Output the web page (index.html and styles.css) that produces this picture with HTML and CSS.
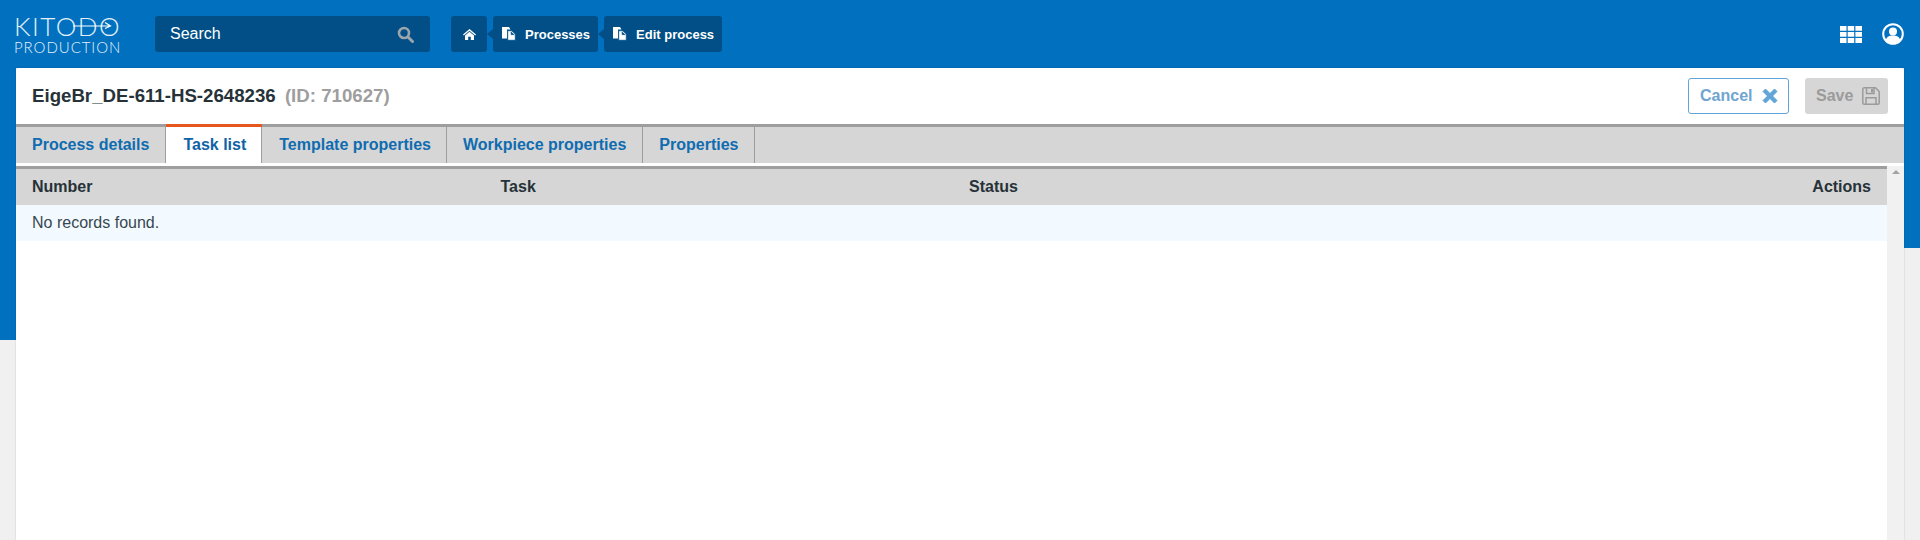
FILE: index.html
```html
<!DOCTYPE html>
<html lang="en">
<head>
<meta charset="utf-8">
<title>Edit process</title>
<link rel="stylesheet" href="styles.css">
</head>
<body>
<header class="topbar">
  <div class="logo">
    <div class="logo-word">KITODO
      <svg class="logo-line" width="40" height="16" viewBox="0 0 40 16"><path d="M0 8H37M32 4.500l5.500 3.500-5.500 2.500" fill="none" stroke="#fff" stroke-width="1.200"/></svg>
    </div>
    <div class="logo-sub">PRODUCTION</div>
  </div>
  <div class="search">
    <span>Search</span>
    <svg class="search-icon" width="17" height="17" viewBox="0 0 17 17"><circle cx="7" cy="7" r="5" fill="none" stroke="#9aa5ac" stroke-width="2.600"/><path d="M11 11l4.500 4.500" stroke="#9aa5ac" stroke-width="3" stroke-linecap="round"/></svg>
  </div>
  <nav class="crumbs">
    <a class="crumb crumb-home"><svg width="13" height="11" viewBox="0 0 13 11"><path d="M6.500 0L13 5.600l-.8.900L6.500 1.700.8 6.500 0 5.600zM2 6.600l4.500-3.800L11 6.600V11H7.800V7.800H5.200V11H2z" fill="#fff"/></svg></a>
    <a class="crumb crumb-link"><svg class="doc" width="14" height="14" viewBox="0 0 14 14"><path d="M0 0h7l1.500 2.500H5v9H0z" fill="#fff"/><path d="M5.700 3.700h4.100L13.300 7v6.300H5.700zM9.200 4.700v2.900h3.100" fill="#fff" stroke="#014f86" stroke-width=".8"/></svg>Processes</a>
    <a class="crumb crumb-link"><svg class="doc" width="14" height="14" viewBox="0 0 14 14"><path d="M0 0h7l1.500 2.500H5v9H0z" fill="#fff"/><path d="M5.700 3.700h4.100L13.300 7v6.300H5.700zM9.200 4.700v2.900h3.100" fill="#fff" stroke="#014f86" stroke-width=".8"/></svg>Edit process</a>
  </nav>
  <div class="top-icons">
    <svg width="22" height="17" viewBox="0 0 22 17"><path fill="#fff" d="M0 0h6.500v4.800H0zM7.700 0h6.500v4.800H7.700zM15.400 0H22v4.800h-6.600zM0 6h6.500v4.800H0zM7.700 6h6.500v4.800H7.700zM15.400 6H22v4.800h-6.600zM0 12h6.500v5H0zM7.700 12h6.500v5H7.700zM15.400 12H22v5h-6.600z"/></svg>
    <svg width="22" height="22" viewBox="0 0 22 22"><circle cx="11" cy="11" r="9.800" fill="none" stroke="#fff" stroke-width="2"/><circle cx="11" cy="8.500" r="4" fill="#fff"/><path d="M3.800 17c1-3.500 3.500-4.500 7.200-4.500s6.200 1 7.200 4.500c-2 2.300-4.400 3.500-7.200 3.500S5.800 19.300 3.800 17z" fill="#fff"/></svg>
  </div>
</header>
<main class="card">
  <div class="titlebar">
    <h1 class="title">EigeBr_DE-611-HS-2648236 <span class="title-id">(ID: 710627)</span></h1>
    <div class="actions">
      <button class="btn btn-cancel">Cancel
        <svg width="16" height="16" viewBox="0 0 16 16"><path d="M3.500 1L8 5.500 12.500 1 15 3.500 10.500 8l4.500 4.500-2.500 2.500L8 10.500 3.500 15 1 12.500 5.500 8 1 3.500z" fill="#5fa5d8" stroke="#5fa5d8" stroke-linejoin="round"/></svg>
      </button>
      <button class="btn btn-save">Save
        <svg width="18" height="18" viewBox="0 0 18 18"><path d="M2.300.8h11.200l3.700 3.700v11.200c0 .8-.7 1.500-1.500 1.500H2.300c-.8 0-1.500-.7-1.500-1.500V2.300c0-.8.700-1.500 1.500-1.500zM4.500 1v5.500h7.500V1M4 16.800v-6h10v6" fill="none" stroke="#9b9b9b" stroke-width="1.500"/><path d="M9 2h2v3.500H9z" fill="#9b9b9b"/></svg>
      </button>
    </div>
  </div>
  <div class="tabs">
    <a class="tab">Process details</a>
    <a class="tab tab-nudge tab-active">Task list</a>
    <a class="tab tab-nudge">Template properties</a>
    <a class="tab">Workpiece properties</a>
    <a class="tab">Properties</a>
  </div>
  <div class="content">
    <div class="table">
      <div class="thead">
        <div>Number</div><div>Task</div><div>Status</div><div class="right">Actions</div>
      </div>
      <div class="empty">No records found.</div>
    </div>
    <div class="scrollbar"><span class="arrow"></span></div>
  </div>
</main>
</body>
</html>
```
FILE: styles.css
```css
* { box-sizing: border-box; }
html, body { height: 100%; }
body {
  margin: 0;
  overflow: hidden;
  font-family: "Liberation Sans", Arial, sans-serif;
  color: #263238;
  background-color: #f0f0f0;
  background-image: linear-gradient(#0070bf, #0070bf), linear-gradient(#0070bf, #0070bf);
  background-repeat: no-repeat;
  background-size: 16px 340px, 16px 248px;
  background-position: left top, right top;
}
.topbar {
  height: 68px;
  background: #0070bf;
  display: flex;
  align-items: center;
  padding: 0 16px 0 14px;
}
.logo { width: 141px; color: #e3f0f9; flex: none; padding-top: 2px; }
.logo-word {
  position: relative;
  font-family: Lato, sans-serif;
  font-weight: 300;
  font-size: 26px;
  line-height: 22px;
  letter-spacing: 1.500px;
  height: 22px;
}
.logo-line { position: absolute; left: 59px; top: 3px; }
.logo-sub {
  margin-top: 2px;
  font-family: Lato, sans-serif;
  font-weight: 300;
  font-size: 15px;
  line-height: 17px;
  letter-spacing: .95px;
}
.search {
  width: 275px;
  height: 36px;
  background: #014f86;
  border-radius: 3px;
  display: flex;
  align-items: center;
  justify-content: space-between;
  padding: 0 16px 0 15px;
  color: #fff;
  font-size: 16px;
}
.crumbs { display: flex; gap: 6px; margin-left: 21px; }
.crumb {
  position: relative;
  height: 36px;
  background: #014f86;
  border-radius: 3px;
  display: flex;
  align-items: center;
  color: #fff;
  font-size: 13px;
  font-weight: 700;
}
.crumb-home { width: 36px; justify-content: center; }
.crumb-link { padding: 0 8px 0 9px; }
.crumb-link::before {
  content: "";
  position: absolute;
  left: -6px;
  top: 13px;
  border-style: solid;
  border-width: 5px 6px 5px 0;
  border-color: transparent #014f86 transparent transparent;
}
.doc { margin-right: 9px; }
.top-icons { margin-left: auto; display: flex; align-items: center; gap: 20px; }
.card {
  margin: 0 16px;
  height: 472px;
  background: #fff;
  border-radius: 3px 3px 0 0;
  box-shadow: 0 0 2px rgba(0, 0, 0, .2);
  display: flex;
  flex-direction: column;
}
.titlebar {
  height: 56px;
  flex: none;
  display: flex;
  align-items: center;
  justify-content: space-between;
  padding: 0 16px;
}
.title { margin: 0; font-size: 18.670px; font-weight: 700; color: #263238; }
.title-id { color: #9e9e9e; margin-left: 4px; }
.actions { display: flex; gap: 16px; }
.btn {
  height: 36px;
  border-radius: 3px;
  font-family: inherit;
  font-size: 16px;
  font-weight: 700;
  display: flex;
  align-items: center;
  justify-content: space-between;
}
.btn-cancel {
  width: 101px;
  background: #fff;
  border: 1px solid #5fa5d8;
  color: #6fa5d0;
  padding: 0 10px 0 11px;
}
.btn-save {
  width: 83px;
  background: #d6d6d6;
  border: 0;
  color: #9b9b9b;
  padding: 0 8px 0 11px;
}
.tabs {
  height: 39px;
  flex: none;
  display: flex;
  background: #d6d6d6;
  border-top: 3px solid #9e9e9e;
}
.tab {
  display: flex;
  align-items: center;
  padding: 0 16px;
  color: #0f6cb0;
  font-size: 16px;
  font-weight: 700;
  border-right: 1px solid #9e9e9e;
}
.tab-nudge { padding: 0 15px 0 17px; }
.tab-active {
  position: relative;
  background: #fff;
  color: #0f63a5;
}
.tab-active::before {
  content: "";
  position: absolute;
  left: 0;
  right: -1px;
  top: -3px;
  height: 3px;
  background: #e6561e;
}
.content { flex: 1; display: flex; padding-top: 3px; min-height: 0; }
.table { flex: 1; }
.thead {
  height: 39px;
  background: #d6d6d6;
  border-top: 3px solid #9e9e9e;
  display: grid;
  grid-template-columns: 468.500px 468.500px 1fr 1fr;
  align-items: center;
  font-size: 16px;
  font-weight: 700;
  color: #263238;
}
.thead > div { padding: 0 16px; }
.right { text-align: right; }
.empty {
  height: 36px;
  background: #f3faff;
  display: flex;
  align-items: center;
  padding: 0 16px;
  font-size: 16px;
  color: #37474f;
}
.scrollbar { width: 17px; background: #f1f1f1; position: relative; }
.arrow {
  position: absolute;
  left: 5px;
  top: 4px;
  border-style: solid;
  border-width: 0 4px 4px;
  border-color: transparent transparent #a3a3a3;
}
```
